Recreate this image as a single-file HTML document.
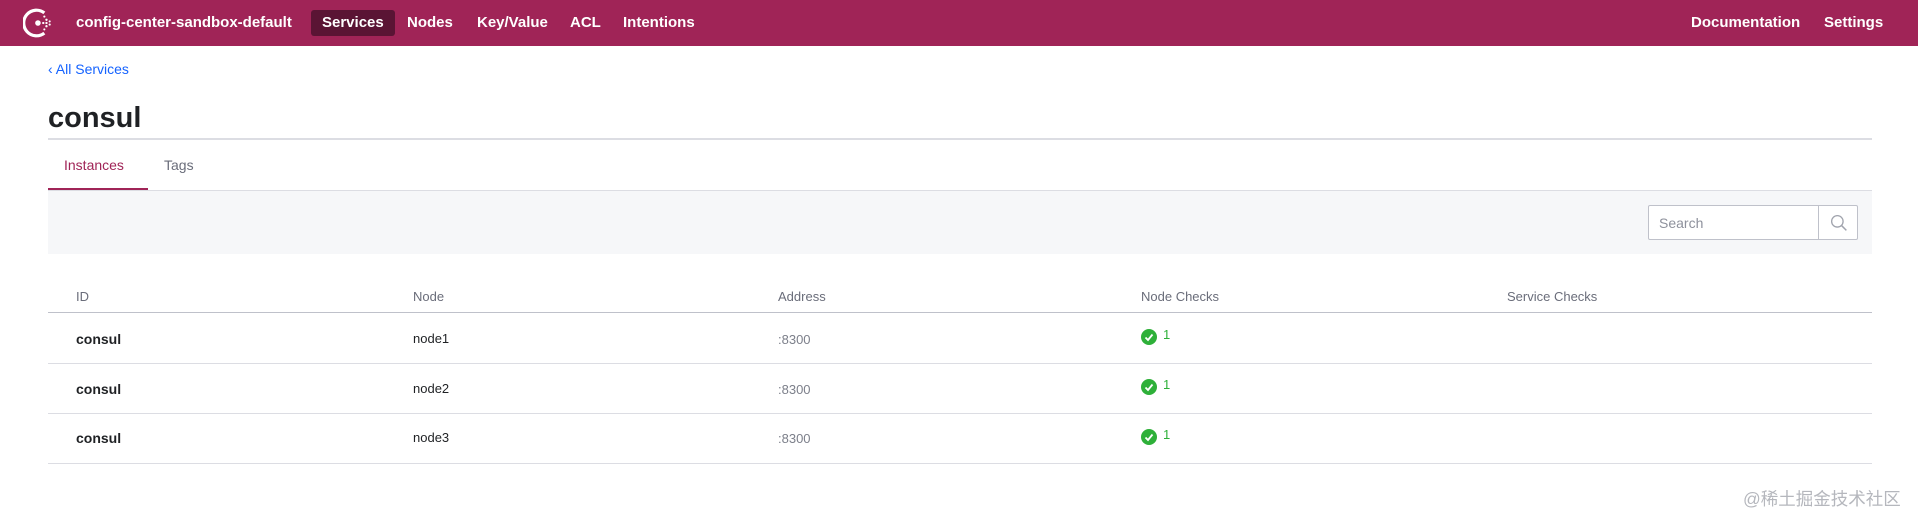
<!DOCTYPE html>
<html><head><meta charset="utf-8"><style>
*{margin:0;padding:0;box-sizing:border-box}
body{width:1918px;height:522px;background:#fff;font-family:"Liberation Sans",sans-serif;position:relative;overflow:hidden}
.a{position:absolute;white-space:nowrap}
nav{position:absolute;left:0;top:0;width:1918px;height:46px;background:#a02457}
nav .a{color:#fff;font-size:15px;font-weight:bold;top:14px}
.sel{position:absolute;left:311px;top:10px;width:84px;height:26px;background:#5a1434;border-radius:3px}
.th{color:#6a6d7a;font-size:13px;top:289px}
.hl{position:absolute;left:48px;width:1824px;height:1px;background:#dcdde3}
.id{color:#1f2124;font-size:14px;font-weight:bold}
.nd{color:#1f2124;font-size:13px}
.ad{color:#7c7f8a;font-size:13px}
.ck{color:#2eb039;font-size:13px}
.dot{position:absolute;width:16px;height:16px;border-radius:50%;background:#2eb039}
</style></head><body>
<nav>
<svg class="a" style="left:23px;top:7px" width="32" height="32" viewBox="0 0 30 30">
<path d="M20 5.5 A12 12 0 1 0 20 24.5" fill="none" stroke="#fff" stroke-width="3"/>
<circle cx="14" cy="15" r="2.6" fill="#fff"/>
<g fill="#fff"><circle cx="19" cy="15" r="1.1"/><circle cx="22" cy="12" r="1.1"/><circle cx="22" cy="18" r="1.1"/><circle cx="22" cy="15" r="1.1"/><circle cx="25" cy="13.5" r="1"/><circle cx="25" cy="16.5" r="1"/><circle cx="20" cy="9" r="1"/><circle cx="20" cy="21" r="1"/></g>
</svg>
<div class="sel"></div>
<div class="a" style="left:76px">config-center-sandbox-default</div>
<div class="a" style="left:322px">Services</div>
<div class="a" style="left:407px">Nodes</div>
<div class="a" style="left:477px">Key/Value</div>
<div class="a" style="left:570px">ACL</div>
<div class="a" style="left:623px">Intentions</div>
<div class="a" style="left:1691px">Documentation</div>
<div class="a" style="left:1824px">Settings</div>
</nav>
<div class="a" style="left:48px;top:61px;color:#1563ff;font-size:14px">‹ All Services</div>
<div class="a" style="left:48px;top:102px;color:#1f2124;font-size:29px;font-weight:bold">consul</div>
<div class="hl" style="top:138px;height:2px;background:#dcdde3"></div>
<div class="a" style="left:64px;top:157px;color:#a02457;font-size:14px">Instances</div>
<div class="a" style="left:164px;top:157px;color:#6a6d7a;font-size:14px">Tags</div>
<div style="position:absolute;left:48px;top:188px;width:100px;height:2px;background:#a02457"></div>
<div class="hl" style="top:190px"></div>
<div style="position:absolute;left:48px;top:191px;width:1824px;height:63px;background:#f6f7f9"></div>
<div style="position:absolute;left:1648px;top:205px;width:210px;height:35px;border:1px solid #bfc1ca;border-radius:2px;background:#fff"></div>
<div style="position:absolute;left:1818px;top:205px;width:1px;height:35px;background:#bfc1ca"></div>
<div class="a" style="left:1659px;top:215px;color:#8e919c;font-size:14px">Search</div>
<svg class="a" style="left:1830px;top:214px" width="18" height="18" viewBox="0 0 22 22"><circle cx="9" cy="9" r="7" fill="none" stroke="#a0a3ad" stroke-width="1.6"/><path d="M14 14 L20 20" stroke="#a0a3ad" stroke-width="1.8"/></svg>
<div class="a th" style="left:76px">ID</div>
<div class="a th" style="left:413px">Node</div>
<div class="a th" style="left:778px">Address</div>
<div class="a th" style="left:1141px">Node Checks</div>
<div class="a th" style="left:1507px">Service Checks</div>
<div class="hl" style="top:312px;background:#bfc1ca"></div>
<div class="a id" style="left:76px;top:331px">consul</div><div class="a nd" style="left:413px;top:331px">node1</div><div class="a ad" style="left:778px;top:332px">:8300</div>
<div class="dot" style="left:1141px;top:329px"></div><div class="a ck" style="left:1163px;top:327px">1</div>
<div class="hl" style="top:363px"></div>
<div class="a id" style="left:76px;top:381px">consul</div><div class="a nd" style="left:413px;top:381px">node2</div><div class="a ad" style="left:778px;top:382px">:8300</div>
<div class="dot" style="left:1141px;top:379px"></div><div class="a ck" style="left:1163px;top:377px">1</div>
<div class="hl" style="top:413px"></div>
<div class="a id" style="left:76px;top:430px">consul</div><div class="a nd" style="left:413px;top:430px">node3</div><div class="a ad" style="left:778px;top:431px">:8300</div>
<div class="dot" style="left:1141px;top:429px"></div><div class="a ck" style="left:1163px;top:427px">1</div>
<div class="hl" style="top:463px"></div>
<svg class="a" style="left:1141px;top:329px" width="16" height="116" viewBox="0 0 16 116"><g fill="none" stroke="#fff" stroke-width="1.8"><path d="M4.5 8.5 L7 11 L11.5 5.5"/><path d="M4.5 58.5 L7 61 L11.5 55.5"/><path d="M4.5 108.5 L7 111 L11.5 105.5"/></g></svg>
<div class="a" style="left:1743px;top:486px;color:#b5b7bd;font-size:17.5px;font-family:'Liberation Sans','Noto Sans CJK SC',sans-serif">@稀土掘金技术社区</div>
</body></html>
